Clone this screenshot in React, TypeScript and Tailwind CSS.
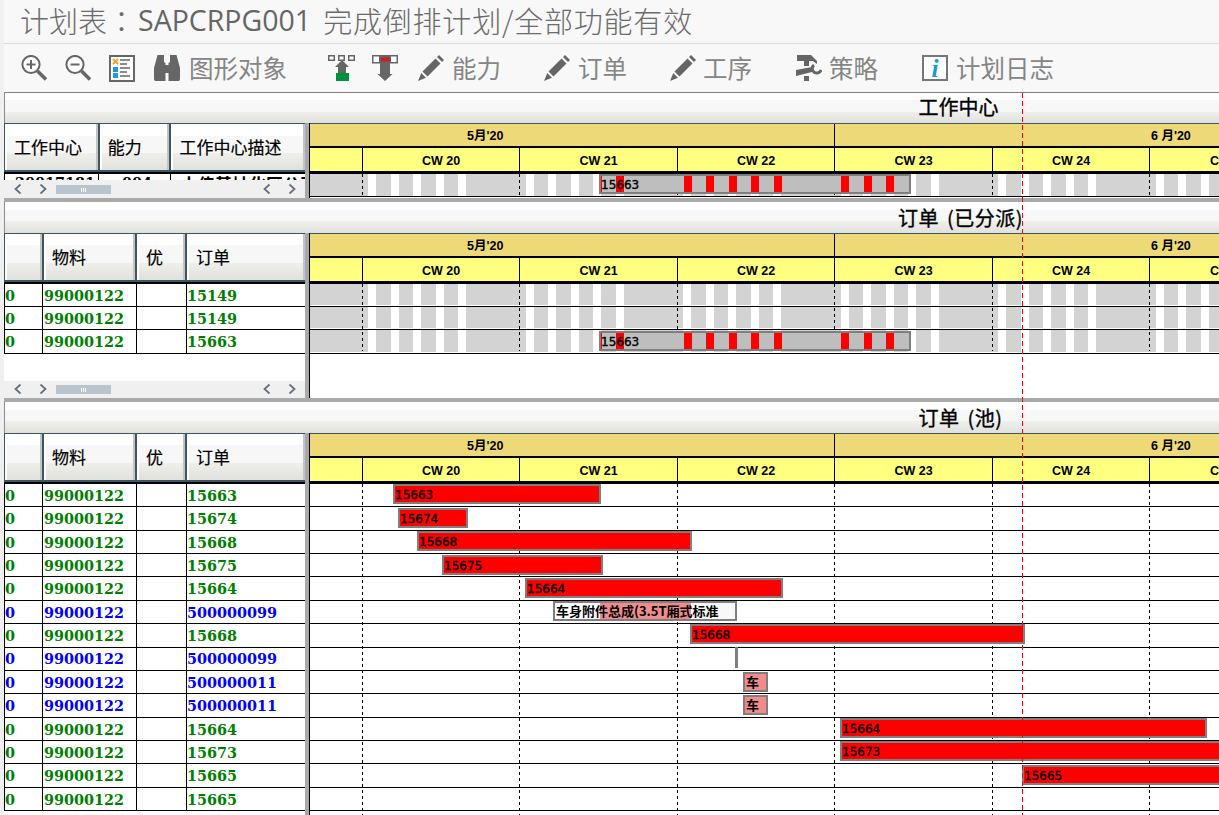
import React from "react";

const weekXs = [362, 519, 677, 834, 992, 1149];
const stripeXs: number[] = [];
for (let w = 0; w < 6; w++) for (let d = 0; d < 5; d++) stripeXs.push(368 + 157.5 * w + 22.5 * d);

const cjk = "font-['Noto_Sans_CJK_SC','Noto_Sans',sans-serif]";
const rowFont = "font-['DejaVu_Serif',serif] font-bold text-[14.4px]";
const barFont = "font-['DejaVu_Sans','Noto_Sans_CJK_SC',sans-serif] text-[12px] [-webkit-text-stroke:0.4px_#000]";
const gradient =
  "bg-[linear-gradient(to_bottom,#fff_0,#fff_25%,#f7f7f7_25%,#f7f7f7_62%,#efefec_62%,#e0e0dc_100%)]";

function Chevron({ dir }: { dir: "l" | "r" }) {
  return (
    <svg width="8" height="12" viewBox="0 0 8 12" className="shrink-0">
      <path d={dir === "l" ? "M6.5 1.5 L1.5 6 L6.5 10.5" : "M1.5 1.5 L6.5 6 L1.5 10.5"} fill="none" stroke="#68707c" strokeWidth="1.8" />
    </svg>
  );
}

function Scrollbar({ h }: { h: string }) {
  return (
    <div className={`${h} bg-[#f0f0f0] flex items-end pb-1 shrink-0`}>
      <div className="ml-[10px] mb-[-1px]"><Chevron dir="l" /></div>
      <div className="ml-[17px] mb-[-1px]"><Chevron dir="r" /></div>
      <div className="ml-[9px] w-[55px] h-[9px] bg-[#b8c4ce] flex items-center justify-center gap-px">
        <span className="w-px h-[4px] bg-white" />
        <span className="w-px h-[4px] bg-white" />
        <span className="w-px h-[4px] bg-white" />
      </div>
      <div className="ml-[152px] mb-[-1px]"><Chevron dir="l" /></div>
      <div className="ml-[17px] mb-[-1px]"><Chevron dir="r" /></div>
    </div>
  );
}

function PanelTitle({ text, cls }: { text: string; cls: string }) {
  return (
    <div className={`h-[31px] ${gradient} ${cls} border-l border-l-[#8a8a8a] w-[1912px] flex items-center justify-center shrink-0 ${cjk} text-[20px] [-webkit-text-stroke:0.35px_#000] text-black`}>
      {text}
    </div>
  );
}

function ChartHeader() {
  return (
    <div className="h-[51px] shrink-0 flex flex-col overflow-hidden font-['Liberation_Sans','Noto_Sans_CJK_SC',sans-serif] font-bold text-[12.5px] text-black border-t border-t-[#3e5563]">
      <div className="h-[22px] flex bg-[#edd977] shrink-0">
        <div className="w-[525px] shrink-0 border-r border-r-black pl-[157px] flex items-center pt-[3px]">5月'20</div>
        <div className="pl-[316px] shrink-0 flex items-center pt-[3px]">6 月'20</div>
      </div>
      <div className="h-[2px] bg-black shrink-0" />
      <div className="h-[23px] flex bg-[#ffff80] shrink-0 w-[1100px]">
        <div className="w-[53px] shrink-0 border-r border-r-black" />
        <div className="w-[157px] shrink-0 border-r border-r-black flex items-center justify-center pt-[3px]">CW 20</div>
        <div className="w-[158px] shrink-0 border-r border-r-black flex items-center justify-center pt-[3px]">CW 21</div>
        <div className="w-[157px] shrink-0 border-r border-r-black flex items-center justify-center pt-[3px]">CW 22</div>
        <div className="w-[158px] shrink-0 border-r border-r-black flex items-center justify-center pt-[3px]">CW 23</div>
        <div className="w-[157px] shrink-0 border-r border-r-black flex items-center justify-center pt-[3px]">CW 24</div>
        <div className="w-[158px] shrink-0 flex items-center justify-center pt-[3px]">CW 25</div>
      </div>
      <div className="h-[3px] bg-black shrink-0" />
    </div>
  );
}

function HeaderCell({ label, cls, pad }: { label: string; cls: string; pad: string }) {
  return (
    <div className={`${cls} h-[46px] ${gradient} border-r-2 border-r-[#c4c4c0] border-l-2 border-l-white flex items-center ${pad} ${cjk} text-[17px] [-webkit-text-stroke:0.2px_#000] text-black overflow-hidden whitespace-nowrap`}>
      {label}
    </div>
  );
}

function LeftHeader({ cols }: { cols: { label: string; cls: string; pad: string }[] }) {
  return (
    <div className="h-[51px] shrink-0 bg-[#3e5563] pt-px pl-px">
      <div className="flex gap-[2px]">
        {cols.map((c, i) => <HeaderCell key={i} {...c} />)}
      </div>
      <div className="h-[2px] mt-[2px] bg-black ml-[-1px]" />
    </div>
  );
}

const orderCols = [
  { label: "", cls: "w-[37px]", pad: "" },
  { label: "物料", cls: "w-[91px]", pad: "pl-[6px]" },
  { label: "优", cls: "w-[48px]", pad: "pl-[7px]" },
  { label: "订单", cls: "w-[118px]", pad: "pl-[7px]" },
];

const wcCols = [
  { label: "工作中心", cls: "w-[93px]", pad: "pl-[7px]" },
  { label: "能力", cls: "w-[70px]", pad: "pl-[6px]" },
  { label: "工作中心描述", cls: "w-[134px]", pad: "pl-[6px]" },
];

function LeftRow({ mat, ord, blue, h }: { mat: string; ord: string; blue?: boolean; h: string }) {
  const color = blue ? "text-[#0000ff]" : "text-[#008000]";
  return (
    <div className={`${h} flex border-b border-b-black border-l border-l-black ${rowFont} ${color} leading-none shrink-0`}>
      <div className="w-[38px] border-r border-r-black flex items-center pt-[2px]">0</div>
      <div className="w-[94px] border-r border-r-black flex items-center pl-px pt-[2px]">{mat}</div>
      <div className="w-[50px] border-r border-r-black" />
      <div className="flex-1 flex items-center pt-[2px]">{ord}</div>
    </div>
  );
}

function Splitter() {
  return (
    <div className="flex shrink-0">
      <div className="w-[4px] bg-[#a9a9a9]" />
      <div className="w-px bg-black" />
    </div>
  );
}

function DotLines({ bottom = 0 }: { bottom?: number }) {
  return (
    <>
      {weekXs.map((x) => (
        <div
          key={x}
          className="absolute top-0 w-px bg-[repeating-linear-gradient(to_bottom,#000_0,#000_3px,transparent_3px,transparent_6px)]"
          style={{ left: x - 310, bottom }}
        />
      ))}
    </>
  );
}

function Stripes() {
  return (
    <>
      {stripeXs.map((x) => (
        <div key={x} className="absolute top-0 bottom-0 w-[8px] bg-white" style={{ left: Math.round(x) - 310 }} />
      ))}
    </>
  );
}

const capacitySegs = [616, 684, 706, 729, 751, 774, 841, 864, 886];

function CapacityBar({ top }: { top: number }) {
  return (
    <div
      className={`absolute h-[20px] w-[312px] border-2 border-[#7f7f7f] bg-[#bebebe] overflow-hidden ${barFont} leading-[19px] text-black`}
      style={{ left: 599 - 310, top }}
    >
      {capacitySegs.map((x) => (
        <div key={x} className="absolute top-0 bottom-0 w-[8px] bg-[#ff0000]" style={{ left: x - 601 }} />
      ))}
      <div className="absolute left-0 top-0 bottom-0 w-px bg-[#ff0000]" />
      <span className="relative">15663</span>
    </div>
  );
}

const poolBars = [
  { x1: 393, x2: 601, y: 484, t: "15663" },
  { x1: 398, x2: 468, y: 508, t: "15674" },
  { x1: 417, x2: 692, y: 531, t: "15668" },
  { x1: 442, x2: 603, y: 555, t: "15675" },
  { x1: 525, x2: 783, y: 578, t: "15664" },
  { x1: 690, x2: 1025, y: 624, t: "15668" },
  { x1: 840, x2: 1207, y: 718, t: "15664" },
  { x1: 840, x2: 1260, y: 741, t: "15673" },
  { x1: 1022, x2: 1300, y: 765, t: "15665" },
];

function ToolText({ text, cls }: { text: string; cls: string }) {
  return <span className={`${cls} ${cjk} text-[24.5px] leading-none text-[#858585] whitespace-nowrap shrink-0`}>{text}</span>;
}

function Magnifier({ plus, cls }: { plus?: boolean; cls: string }) {
  return (
    <svg width="27" height="26" viewBox="0 0 27 26" className={`${cls} shrink-0`}>
      <circle cx="10" cy="9.5" r="8.6" fill="#fff" stroke="#666" strokeWidth="2" />
      <path d="M5.5 9.5 H14.5" stroke="#666" strokeWidth="2" />
      {plus && <path d="M10 5 V14" stroke="#666" strokeWidth="2" />}
      <path d="M16.5 16 L25 24.5" stroke="#666" strokeWidth="3.6" />
    </svg>
  );
}

function Pencil({ cls }: { cls: string }) {
  return (
    <svg width="26" height="26" viewBox="0 0 26 26" className={`${cls} shrink-0`}>
      <path d="M4.5 16.5 L17.5 3.5 L22.5 8.5 L9.5 21.5 Z" fill="#666" />
      <path d="M19 2 L21 0 L26 5 L24 7 Z" fill="#666" />
      <path d="M3.3 18 L8 22.7 L0 26 Z" fill="#666" />
    </svg>
  );
}

export default function App() {
  return (
    <div className="relative w-[1219px] h-[815px] overflow-hidden bg-[#f0f0f0] pl-1">
      <div className="bg-[#f8f8f8]">
        <div className="h-[44px] border-b border-b-[#dcdcdc] flex items-center pl-4 whitespace-nowrap text-[#6b6b6b] text-[29px] font-['Noto_Sans_CJK_SC',sans-serif] font-light pb-[2px]">
          计划表<span className="font-['Noto_Sans_CJK_TC',sans-serif]">：</span><span className="font-['Open_Sans',sans-serif] font-normal text-[#666] text-[28.5px] ml-[2px] mr-[12px]">SAPCRPG001</span><span className="tracking-[0.8px]">完成倒排计划/全部功能有效</span>
        </div>
        <div className="h-[48px] flex items-center">
          <Magnifier plus cls="ml-[17px]" />
          <Magnifier cls="ml-[17px]" />
          <svg width="26" height="27" viewBox="0 0 26 27" className="ml-[17px] shrink-0">
            <rect x="1" y="1" width="24" height="25" fill="#fff" stroke="#666" strokeWidth="2" />
            <path d="M4 4 L9 9 M9 4 L4 9" stroke="#f0a020" strokeWidth="1.8" />
            <rect x="4" y="12" width="5" height="5" fill="#1a9be0" />
            <rect x="4" y="18" width="5" height="5" fill="#1a9be0" />
            <path d="M11 5 H21 M11 9 H18 M11 13 H21 M11 17 H18 M11 21 H21" stroke="#666" strokeWidth="1.6" />
          </svg>
          <svg width="26" height="26" viewBox="0 0 26 26" className="ml-[19px] shrink-0">
            <path d="M3.5 0 H10 V7 L11.5 8 V26 H1.5 Q0 26 0 24 V13 Z" fill="#666" />
            <path d="M22.5 0 H16 V7 L14.5 8 V26 H24.5 Q26 26 26 24 V13 Z" fill="#666" />
            <rect x="11" y="10" width="4" height="8" fill="#666" />
          </svg>
          <ToolText text="图形对象" cls="ml-[9px]" />
          <svg width="27" height="26" viewBox="0 0 27 26" className="ml-[41px] shrink-0">
            <rect x="0.75" y="0.75" width="5.5" height="4.5" fill="#fff" stroke="#666" strokeWidth="1.5" />
            <rect x="10.75" y="0.75" width="5.5" height="4.5" fill="#fff" stroke="#666" strokeWidth="1.5" />
            <rect x="20.75" y="0.75" width="5.5" height="4.5" fill="#fff" stroke="#666" strokeWidth="1.5" />
            <path d="M14 5 L21 12 H18 V18 H10 V12 H7 Z" fill="#666" />
            <rect x="8" y="18" width="13" height="8" fill="#00923f" />
          </svg>
          <svg width="26" height="26" viewBox="0 0 26 26" className="ml-[17px] shrink-0">
            <rect x="0.75" y="0.75" width="24.5" height="7" fill="#fff" stroke="#666" strokeWidth="1.5" />
            <rect x="7" y="1" width="12" height="6.5" fill="#666" />
            <rect x="9" y="2.5" width="9" height="4" fill="#cc1f1f" />
            <path d="M8 8 H18 V19 H20.5 L13 26 L5.5 19 H8 Z" fill="#666" />
          </svg>
          <Pencil cls="ml-[20px]" />
          <ToolText text="能力" cls="ml-[8px]" />
          <Pencil cls="ml-[43px]" />
          <ToolText text="订单" cls="ml-[8px]" />
          <Pencil cls="ml-[43px]" />
          <ToolText text="工序" cls="ml-[7px]" />
          <svg width="26" height="26" viewBox="0 0 26 26" className="ml-[44px] shrink-0">
            <path d="M1 0 H15 L21 6 V9 L17 6 H13 V11 H8 V6 H1 Z" fill="#666" />
            <path d="M0 15 L16 12 V17 L0 21 Z" fill="#666" />
            <path d="M18 10 A4.5 4.5 0 1 0 25 15" fill="none" stroke="#666" strokeWidth="3" />
            <rect x="8" y="21" width="5" height="5" fill="#666" />
          </svg>
          <ToolText text="策略" cls="ml-[7px]" />
          <div className="ml-[44px] w-[26px] h-[26px] border-2 border-[#777] bg-white flex items-center justify-center shrink-0 font-['Liberation_Serif',serif] italic font-bold text-[25px] leading-none text-[#0a9ee0]">
            i
          </div>
          <ToolText text="计划日志" cls="ml-[8px]" />
        </div>
      </div>

      {/* Work-centre panel */}
      <PanelTitle text="工作中心" cls="border-t border-t-[#7f7f7f] pb-[2px] pr-[4px]" />
      <div className="h-[75px] flex bg-white">
        <div className="w-[301px] flex flex-col shrink-0">
          <LeftHeader cols={wcCols} />
          <div className="h-[6px] flex overflow-hidden border-l border-l-black shrink-0 text-black whitespace-nowrap">
            <div className={`w-[94px] border-r border-r-black pl-[10px] pt-px ${rowFont} leading-[16px]`}>20017181</div>
            <div className={`w-[72px] border-r border-r-black pl-[23px] pt-px ${rowFont} leading-[16px]`}>004</div>
            <div className={`flex-1 pl-[10px] pt-px ${cjk} text-[17px] leading-[18px] font-bold overflow-hidden`}>上传基址化区公司</div>
          </div>
          <Scrollbar h="h-[18px]" />
        </div>
        <Splitter />
        <div className="flex-1 min-w-0 flex flex-col">
          <ChartHeader />
          <div className="relative h-[23px] bg-[#d3d3d3] border-b border-b-black overflow-hidden shrink-0">
            <Stripes />
            <DotLines />
            <CapacityBar top={0} />
          </div>
          <div className="flex-1 bg-white" />
        </div>
      </div>
      <div className="h-[4px] bg-[#a9a9a9]" />

      {/* Dispatched orders */}
      <PanelTitle text="订单 (已分派)" cls="tracking-[0.5px] [word-spacing:3px]" />
      <div className="h-[165px] flex bg-white">
        <div className="w-[301px] flex flex-col shrink-0">
          <LeftHeader cols={orderCols} />
          <LeftRow mat="99000122" ord="15149" h="h-[23.2px]" />
          <LeftRow mat="99000122" ord="15149" h="h-[23.2px]" />
          <LeftRow mat="99000122" ord="15663" h="h-[23.2px]" />
          <div className="flex-1" />
          <Scrollbar h="h-[17px]" />
        </div>
        <Splitter />
        <div className="flex-1 min-w-0 flex flex-col">
          <ChartHeader />
          <div className="relative shrink-0">
            {[0, 1, 2].map((i) => (
              <div key={i} className="relative h-[23.2px] border-b border-b-black">
                <div className="absolute inset-x-0 top-0 bottom-px bg-[#d3d3d3] overflow-hidden">
                  <Stripes />
                </div>
              </div>
            ))}
            <DotLines bottom={3} />
            <CapacityBar top={47} />
          </div>
        </div>
      </div>
      <div className="h-[4px] bg-[#a9a9a9]" />

      {/* Pool orders */}
      <PanelTitle text="订单 (池)" cls="tracking-[0.5px] [word-spacing:3px]" />
      <div className="h-[382px] flex bg-white">
        <div className="w-[301px] flex flex-col shrink-0">
          <LeftHeader cols={orderCols} />
          {[
            ["15663"], ["15674"], ["15668"], ["15675"], ["15664"],
            ["500000099", "b"], ["15668"], ["500000099", "b"], ["500000011", "b"], ["500000011", "b"],
            ["15664"], ["15673"], ["15665"], ["15665"],
          ].map((r, i) => (
            <LeftRow key={i} mat="99000122" ord={r[0]} blue={r[1] === "b"} h="h-[23.36px]" />
          ))}
        </div>
        <Splitter />
        <div className="flex-1 min-w-0 flex flex-col">
          <ChartHeader />
          <div className="relative flex-1 overflow-hidden">
            <DotLines />
            {Array.from({ length: 14 }).map((_, i) => (
              <div key={i} className="relative h-[23.36px] border-b border-b-black" />
            ))}
            {poolBars.map((b, i) => (
              <div
                key={i}
                className={`absolute h-[20px] border-2 border-[#7f7f7f] bg-[#ff0000] ${barFont} leading-[19px] text-black whitespace-nowrap overflow-hidden`}
                style={{ left: b.x1 - 310, width: b.x2 - b.x1, top: b.y - 484 }}
              >
                {b.t}
              </div>
            ))}
            <div
              className={`absolute h-[20px] w-[184px] border-2 border-[#7f7f7f] bg-white overflow-hidden ${cjk} font-bold text-[13px] leading-[16px] text-black whitespace-nowrap`}
              style={{ left: 553 - 310, top: 601 - 484 }}
            >
              <div className="absolute top-0 bottom-0 bg-[#f28c8c]" style={{ left: 45, width: 91 }} />
              <div className="absolute top-0 bottom-0 bg-[#f8f8f8]" style={{ left: 136, right: 0 }} />
              <span className="relative ml-px">车身附件总成(3.5T厢式标准</span>
            </div>
            <div className="absolute w-[3px] h-[21px] bg-[#7f7f7f]" style={{ left: 735 - 310, top: 647 - 484 }} />
            {[672, 695].map((y) => (
              <div
                key={y}
                className={`absolute h-[20px] w-[25px] border-2 border-[#7f7f7f] bg-[#f28c8c] ${cjk} font-bold text-[13px] leading-[16px] text-black pl-px overflow-hidden`}
                style={{ left: 743 - 310, top: y - 484 }}
              >
                车
              </div>
            ))}
          </div>
        </div>
      </div>

      {/* Current date line */}
      <div className="absolute left-[1022px] top-[93px] bottom-0 w-px bg-[repeating-linear-gradient(to_bottom,#ff0000_0,#ff0000_5px,transparent_5px,transparent_8px)]" />
    </div>
  );
}
